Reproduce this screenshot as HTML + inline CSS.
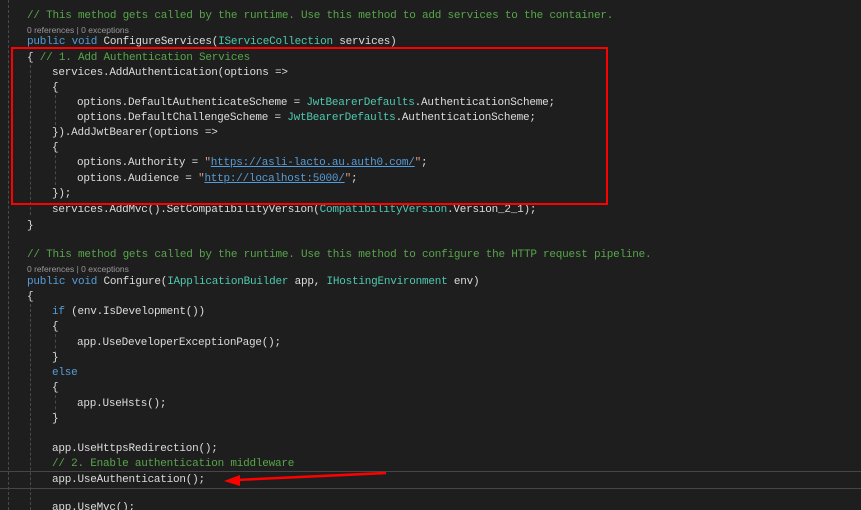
<!DOCTYPE html>
<html><head><style>
html,body{margin:0;padding:0;background:#1e1e1e;width:861px;height:510px;overflow:hidden;position:relative}
.l{position:absolute;white-space:pre;font-family:"Liberation Mono","DejaVu Sans Mono",monospace;font-size:11px;letter-spacing:-0.23px;color:#dcdcdc;line-height:14px;height:14px}
.r{position:absolute;white-space:pre;font-family:"Liberation Sans",sans-serif;font-size:8.5px;color:#999;line-height:10px}
.k{color:#569cd6}.c{color:#57a64a}.t{color:#4ec9b0}.s{color:#d69d85}.u{color:#569cd6;text-decoration:underline}
.g{position:absolute;width:0;border-left:1px dashed #4a4a4a}
</style></head><body>
<div class="g" style="left:8px;top:0;height:510px"></div>
<div class="g" style="left:30px;top:65px;height:150px"></div>
<div class="g" style="left:30px;top:304px;height:206px"></div>
<div class="g" style="left:55px;top:95px;height:30px"></div>
<div class="g" style="left:55px;top:155px;height:30px"></div>
<div class="g" style="left:55px;top:334px;height:20px"></div>
<div class="g" style="left:55px;top:395px;height:20px"></div>
<div style="position:absolute;left:0;top:471px;width:861px;height:16px;border-top:1px solid #464646;border-bottom:1px solid #464646"></div>

<div class="l c" style="left:27px;top:9px">// This method gets called by the runtime. Use this method to add services to the container.</div>
<div class="r" style="left:27px;top:25px">0 references | 0 exceptions</div>
<div class="l" style="left:27px;top:35px"><span class="k">public void</span> ConfigureServices(<span class="t">IServiceCollection</span> services)</div>
<div class="l" style="left:27px;top:51px">{ <span class="c">// 1. Add Authentication Services</span></div>
<div class="l" style="left:52px;top:66px">services.AddAuthentication(options =&gt;</div>
<div class="l" style="left:52px;top:81px">{</div>
<div class="l" style="left:77px;top:96px">options.DefaultAuthenticateScheme = <span class="t">JwtBearerDefaults</span>.AuthenticationScheme;</div>
<div class="l" style="left:77px;top:111px">options.DefaultChallengeScheme = <span class="t">JwtBearerDefaults</span>.AuthenticationScheme;</div>
<div class="l" style="left:52px;top:126px">}).AddJwtBearer(options =&gt;</div>
<div class="l" style="left:52px;top:141px">{</div>
<div class="l" style="left:77px;top:156px">options.Authority = <span class="s">"</span><span class="u">https://asli-lacto.au.auth0.com/</span><span class="s">"</span>;</div>
<div class="l" style="left:77px;top:172px">options.Audience = <span class="s">"</span><span class="u">http://localhost:5000/</span><span class="s">"</span>;</div>
<div class="l" style="left:52px;top:187px">});</div>
<div class="l" style="left:52px;top:203px">services.AddMvc().SetCompatibilityVersion(<span class="t">CompatibilityVersion</span>.Version_2_1);</div>
<div class="l" style="left:27px;top:219px">}</div>
<div class="l c" style="left:27px;top:248px">// This method gets called by the runtime. Use this method to configure the HTTP request pipeline.</div>
<div class="r" style="left:27px;top:264px">0 references | 0 exceptions</div>
<div class="l" style="left:27px;top:275px"><span class="k">public void</span> Configure(<span class="t">IApplicationBuilder</span> app, <span class="t">IHostingEnvironment</span> env)</div>
<div class="l" style="left:27px;top:290px">{</div>
<div class="l" style="left:52px;top:305px"><span class="k">if</span> (env.IsDevelopment())</div>
<div class="l" style="left:52px;top:320px">{</div>
<div class="l" style="left:77px;top:336px">app.UseDeveloperExceptionPage();</div>
<div class="l" style="left:52px;top:351px">}</div>
<div class="l" style="left:52px;top:366px"><span class="k">else</span></div>
<div class="l" style="left:52px;top:381px">{</div>
<div class="l" style="left:77px;top:397px">app.UseHsts();</div>
<div class="l" style="left:52px;top:412px">}</div>
<div class="l" style="left:52px;top:442px">app.UseHttpsRedirection();</div>
<div class="l c" style="left:52px;top:457px">// 2. Enable authentication middleware</div>
<div class="l" style="left:52px;top:473px">app.UseAuthentication();</div>
<div class="l" style="left:52px;top:501px">app.UseMvc();</div>

<div style="position:absolute;left:11px;top:47px;width:593px;height:154px;border:2px solid #ff0000"></div>
<svg style="position:absolute;left:0;top:0" width="861" height="510">
<line x1="386" y1="473" x2="236" y2="480" stroke="#ff0000" stroke-width="2.5"/>
<polygon points="224,481 240,475 240,486" fill="#ff0000"/>
</svg>
</body></html>
